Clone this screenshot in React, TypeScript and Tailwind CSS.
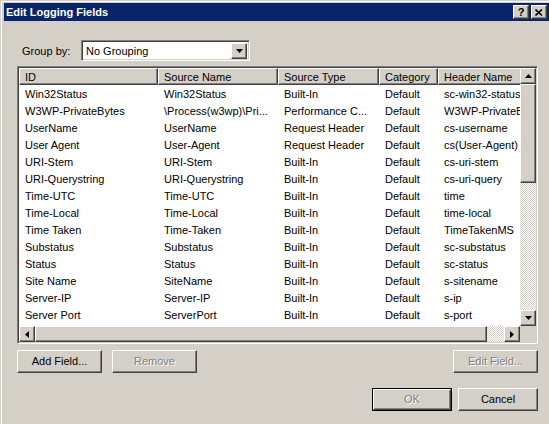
import React from "react";

interface Row {
  id: string;
  source: string;
  type: string;
  category: string;
  header: string;
}

const rows: Row[] = [
  { id: "Win32Status", source: "Win32Status", type: "Built-In", category: "Default", header: "sc-win32-status" },
  { id: "W3WP-PrivateBytes", source: "\\Process(w3wp)\\Pri...", type: "Performance C...", category: "Default", header: "W3WP-PrivateBytes" },
  { id: "UserName", source: "UserName", type: "Request Header", category: "Default", header: "cs-username" },
  { id: "User Agent", source: "User-Agent", type: "Request Header", category: "Default", header: "cs(User-Agent)" },
  { id: "URI-Stem", source: "URI-Stem", type: "Built-In", category: "Default", header: "cs-uri-stem" },
  { id: "URI-Querystring", source: "URI-Querystring", type: "Built-In", category: "Default", header: "cs-uri-query" },
  { id: "Time-UTC", source: "Time-UTC", type: "Built-In", category: "Default", header: "time" },
  { id: "Time-Local", source: "Time-Local", type: "Built-In", category: "Default", header: "time-local" },
  { id: "Time Taken", source: "Time-Taken", type: "Built-In", category: "Default", header: "TimeTakenMS" },
  { id: "Substatus", source: "Substatus", type: "Built-In", category: "Default", header: "sc-substatus" },
  { id: "Status", source: "Status", type: "Built-In", category: "Default", header: "sc-status" },
  { id: "Site Name", source: "SiteName", type: "Built-In", category: "Default", header: "s-sitename" },
  { id: "Server-IP", source: "Server-IP", type: "Built-In", category: "Default", header: "s-ip" },
  { id: "Server Port", source: "ServerPort", type: "Built-In", category: "Default", header: "s-port" },
];

// raised 3d edge, like a classic push button
const raised =
  "border-t border-l border-white border-r border-b border-r-[#404040] border-b-[#404040] shadow-[inset_-1px_-1px_0_#808080]";
const sunken =
  "border-t border-l border-[#808080] border-r border-b border-r-white border-b-white shadow-[inset_1px_1px_0_#404040,inset_-1px_-1px_0_#d4d0c8]";
const track = "bg-[repeating-conic-gradient(#d4d0c8_0_25%,#ffffff_0_50%)] bg-[length:2px_2px]";

function Arrow({ dir }: { dir: "up" | "down" | "left" | "right" }) {
  const pts = {
    up: "3.5,0 7,4 0,4",
    down: "0,0 7,0 3.5,4",
    left: "4,0 4,7 0,3.5",
    right: "0,0 4,3.5 0,7",
  }[dir];
  const vertical = dir === "up" || dir === "down";
  return (
    <svg width={vertical ? 7 : 4} height={vertical ? 4 : 7} viewBox={vertical ? "0 0 7 4" : "0 0 4 7"}>
      <polygon points={pts} fill="#000" />
    </svg>
  );
}

function ScrollButton({ dir }: { dir: "up" | "down" | "left" | "right" }) {
  return (
    <div className={`flex h-[16px] w-[16px] shrink-0 items-center justify-center bg-[#d4d0c8] ${raised}`}>
      <Arrow dir={dir} />
    </div>
  );
}

function Button({ label, disabled, w, isDefault }: { label: string; disabled?: boolean; w: string; isDefault?: boolean }) {
  const inner = (
    <div
      className={`flex h-full w-full items-center justify-center bg-[#d4d0c8] ${raised} ${
        disabled ? "text-[#808080] [text-shadow:1px_1px_0_#fff]" : "text-black"
      }`}
    >
      {label}
    </div>
  );
  if (isDefault) {
    return <div className={`h-[23px] ${w} border border-black`}>{inner}</div>;
  }
  return <div className={`h-[23px] ${w}`}>{inner}</div>;
}

const cols = [
  { key: "id", label: "ID", w: "w-[139px]" },
  { key: "source", label: "Source Name", w: "w-[120px]" },
  { key: "type", label: "Source Type", w: "w-[101px]" },
  { key: "category", label: "Category", w: "w-[59px]" },
  { key: "header", label: "Header Name", w: "w-[110px]" },
] as const;

export default function App() {
  return (
    <div
      className="h-[424px] w-[549px] overflow-hidden border-l border-t border-[#d4d0c8] bg-[#d4d0c8] text-[11px] text-black"
      style={{ fontFamily: '"Liberation Sans", Arial, sans-serif' }}
    >
      <div className="h-full border-l border-t border-white pl-[2px] pt-[1px]">
        {/* Title bar */}
        <div className="flex h-[18px] items-center bg-[#0a246a] pl-[2px] pr-[2px]">
          <span className="flex-1 pt-[1px] text-[11px] font-bold text-white">Edit Logging Fields</span>
          <div className={`flex h-[14px] w-[16px] items-center justify-center bg-[#d4d0c8] ${raised}`}>
            <span className="text-[11px] font-bold leading-none">?</span>
          </div>
          <div className={`ml-[2px] flex h-[14px] w-[16px] items-center justify-center bg-[#d4d0c8] ${raised}`}>
            <svg width="8" height="7" viewBox="0 0 8 7">
              <path d="M0.5 0.5 L7 6.5 M7 0.5 L0.5 6.5" stroke="#000" strokeWidth="1.6" />
            </svg>
          </div>
        </div>

        <div className="ml-[13px] w-[521px]">
          {/* Group by */}
          <div className="mt-[19px] flex items-center">
            <span className="ml-[5px] w-[59px] pt-[1px]">Group by:</span>
            <div className={`flex h-[21px] w-[169px] items-center bg-white p-[2px] ${sunken}`}>
              <span className="flex-1 pl-[2px] pt-[1px]">No Grouping</span>
              <ScrollButton dir="down" />
            </div>
          </div>

          {/* List view */}
          <div className={`mt-[5px] h-[278px] w-[521px] bg-white p-[1px] ${sunken}`}>
            <div className="flex h-[258px]">
              <div className="w-[501px] overflow-hidden">
                <div className="flex h-[17px] w-max">
                  {cols.map((c) => (
                    <div
                      key={c.key}
                      className={`${c.w} flex shrink-0 items-center bg-[#d4d0c8] pl-[5px] pt-[1px] ${raised}`}
                    >
                      {c.label}
                    </div>
                  ))}
                </div>
                {rows.map((r) => (
                  <div key={r.id} className="flex h-[17px] w-max items-start pt-[2px] leading-[15px]">
                    {cols.map((c) => (
                      <div key={c.key} className={`${c.w} shrink-0 overflow-hidden whitespace-nowrap pl-[6px]`}>
                        {r[c.key]}
                      </div>
                    ))}
                  </div>
                ))}
              </div>
              <div className="flex w-[16px] flex-col">
                <ScrollButton dir="up" />
                <div className={`h-[99px] bg-[#d4d0c8] ${raised}`} />
                <div className={`flex-1 ${track}`} />
                <ScrollButton dir="down" />
              </div>
            </div>
            <div className="flex h-[16px]">
              <ScrollButton dir="left" />
              <div className={`w-[452px] bg-[#d4d0c8] ${raised}`} />
              <div className={`flex-1 ${track}`} />
              <ScrollButton dir="right" />
              <div className="w-[16px] bg-[#d4d0c8]" />
            </div>
          </div>

          {/* Field buttons */}
          <div className="mt-[6px] flex">
            <Button label="Add Field..." w="w-[85px]" />
            <div className="ml-[10px]">
              <Button label="Remove" w="w-[85px]" disabled />
            </div>
            <div className="ml-auto">
              <Button label="Edit Field..." w="w-[85px]" disabled />
            </div>
          </div>

          {/* Dialog buttons */}
          <div className="mt-[15px] flex justify-end gap-[6px]">
            <Button label="OK" w="w-[80px]" disabled isDefault />
            <Button label="Cancel" w="w-[80px]" />
          </div>
        </div>
      </div>
    </div>
  );
}
